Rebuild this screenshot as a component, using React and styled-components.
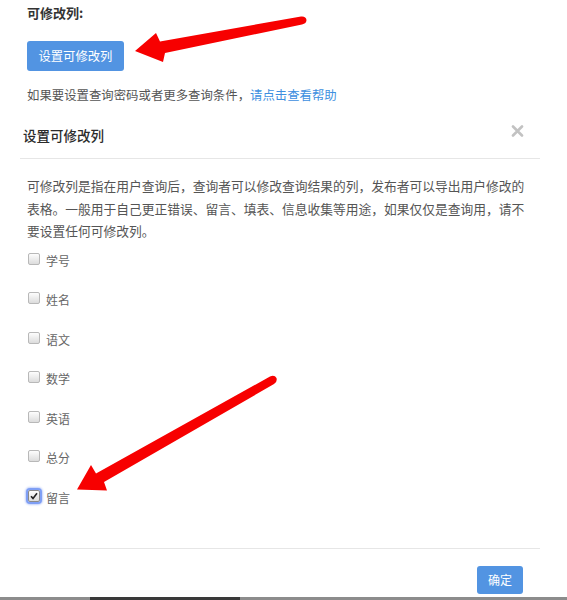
import React, {useState} from 'react'
import styled, {createGlobalStyle} from 'styled-components'

const GlobalStyle = createGlobalStyle`
    body {
        margin: 0;
        background: #fff;
        font-family: "Noto Sans CJK SC", "Noto Sans", sans-serif;
        color: #555;
    }
`

const Page = styled.div`
    position: relative;
    width: 567px;
    height: 600px;
    overflow: hidden;
    display: flex;
    flex-direction: column;
`

const Top = styled.div`
    padding: 3px 0 0 27px;
    display: flex;
    flex-direction: column;
    align-items: flex-start;
`

const FieldLabel = styled.div`
    font-size: 13px;
    line-height: 20px;
    font-weight: bold;
    color: #333;
`

const BlueButton = styled.button`
    border: none;
    border-radius: 3px;
    background: #5294e2;
    color: #fff;
    font-family: inherit;
    font-size: ${p => p.small ? '12px' : '12.3px'};
    height: ${p => p.small ? '28px' : '30px'};
    padding: 0 ${p => p.small ? '11px' : '11.5px'};
    margin-top: ${p => p.small ? '0' : '18px'};
    cursor: pointer;
`

const Help = styled.div`
    margin-top: 14px;
    font-size: 12.4px;
    line-height: 20px;
    color: #555;

    a {
        color: #3d8fe0;
        text-decoration: none;
    }
`

const Modal = styled.div`
    margin: 5px 0 0 20px;
    width: 520px;
    flex: 1;
    display: flex;
    flex-direction: column;
`

const ModalHeader = styled.div`
    height: 48px;
    border-bottom: 1px solid #e6e6e6;
    display: flex;
    align-items: center;
    justify-content: space-between;
    padding: 0 16px 0 3px;
`

const Title = styled.div`
    font-size: 13.5px;
    font-weight: 500;
    color: #2b2b2b;
    margin-top: 1px;
`

const Close = styled.svg`
    width: 13px;
    height: 12px;
    margin-top: -6px;
    cursor: pointer;
`

const ModalBody = styled.div`
    padding: 16px 0 40px 7px;
    border-bottom: 1px solid #e6e6e6;
`

const Intro = styled.p`
    margin: 0;
    width: 500px;
    font-size: 12.75px;
    line-height: 22.5px;
    color: #555;
`

const List = styled.div`
    margin-top: 7.5px;
    display: flex;
    flex-direction: column;
    gap: 19.6px;
`

const Row = styled.label`
    height: 20px;
    display: flex;
    align-items: center;
    gap: 6px;
    font-size: 12px;
    color: #666;
    cursor: pointer;
`

const Box = styled.span`
    width: 10px;
    height: 10px;
    margin: -3px 0 0 1px;
    border: 1px solid ${p => p.checked ? '#8a8a8a' : '#b8b8b8'};
    border-radius: 2px;
    background: linear-gradient(#fdfdfd, #dcdcdc);
    box-shadow: ${p => p.checked ? '0 0 0 2px #7f9ff5, 0 0 2px 3px #c2d0fa' : 'none'};
    display: flex;
    align-items: center;
    justify-content: center;
    flex: none;
`

const ModalFooter = styled.div`
    flex: 1;
    display: flex;
    justify-content: flex-end;
    align-items: flex-start;
    padding: 17px 17px 0 0;
`

const BottomStrip = styled.div`
    height: 3px;
    background: linear-gradient(90deg, #8c8c8c 0 90px, #3a3a3a 90px 240px, #8c8c8c 240px);
`

const Arrows = styled.svg`
    position: absolute;
    left: 0;
    top: 0;
    pointer-events: none;
`

const columns = ['学号', '姓名', '语文', '数学', '英语', '总分', '留言']

const App = () => {
    const [checked, setChecked] = useState({'留言': true})

    const toggle = name => setChecked({...checked, [name]: !checked[name]})

    return (
        <Page>
            <GlobalStyle />
            <Top>
                <FieldLabel>可修改列:</FieldLabel>
                <BlueButton>设置可修改列</BlueButton>
                <Help>如果要设置查询密码或者更多查询条件，<a href="#help">请点击查看帮助</a></Help>
            </Top>
            <Modal>
                <ModalHeader>
                    <Title>设置可修改列</Title>
                    <Close viewBox="0 0 13 12">
                        <path d="M2 1.5 L11 10.5 M11 1.5 L2 10.5" stroke="#c2c2c2" strokeWidth="2.6" strokeLinecap="round" />
                    </Close>
                </ModalHeader>
                <ModalBody>
                    <Intro>
                        可修改列是指在用户查询后，查询者可以修改查询结果的列，发布者可以导出用户修改的表格。一般用于自己更正错误、留言、填表、信息收集等用途，如果仅仅是查询用，请不要设置任何可修改列。
                    </Intro>
                    <List>
                        {columns.map(name => (
                            <Row key={name} onClick={() => toggle(name)}>
                                <Box checked={checked[name]}>
                                    {checked[name] && (
                                        <svg width="8" height="8" viewBox="0 0 8 8">
                                            <path d="M1 4.2 L3 6.4 L7 1.2" fill="none" stroke="#222" strokeWidth="1.6" />
                                        </svg>
                                    )}
                                </Box>
                                {name}
                            </Row>
                        ))}
                    </List>
                </ModalBody>
                <ModalFooter>
                    <BlueButton small>确定</BlueButton>
                </ModalFooter>
            </Modal>
            <BottomStrip />
            <Arrows width="567" height="600" viewBox="0 0 567 600">
                <path d="M135 51 L156 33 L160 41.5 L301 16.5 Q306 16 306.5 20 Q306.5 23.5 302 24.5 L165 53 L163 62 Z" fill="#f70000" />
                <path d="M77 489.5 L91 465 L96 473.5 L270 376.5 Q274.5 374.5 276.5 378 Q277.5 382 274 384 L104 482 L107 490.5 Z" fill="#f70000" />
            </Arrows>
        </Page>
    )
}

export default App
